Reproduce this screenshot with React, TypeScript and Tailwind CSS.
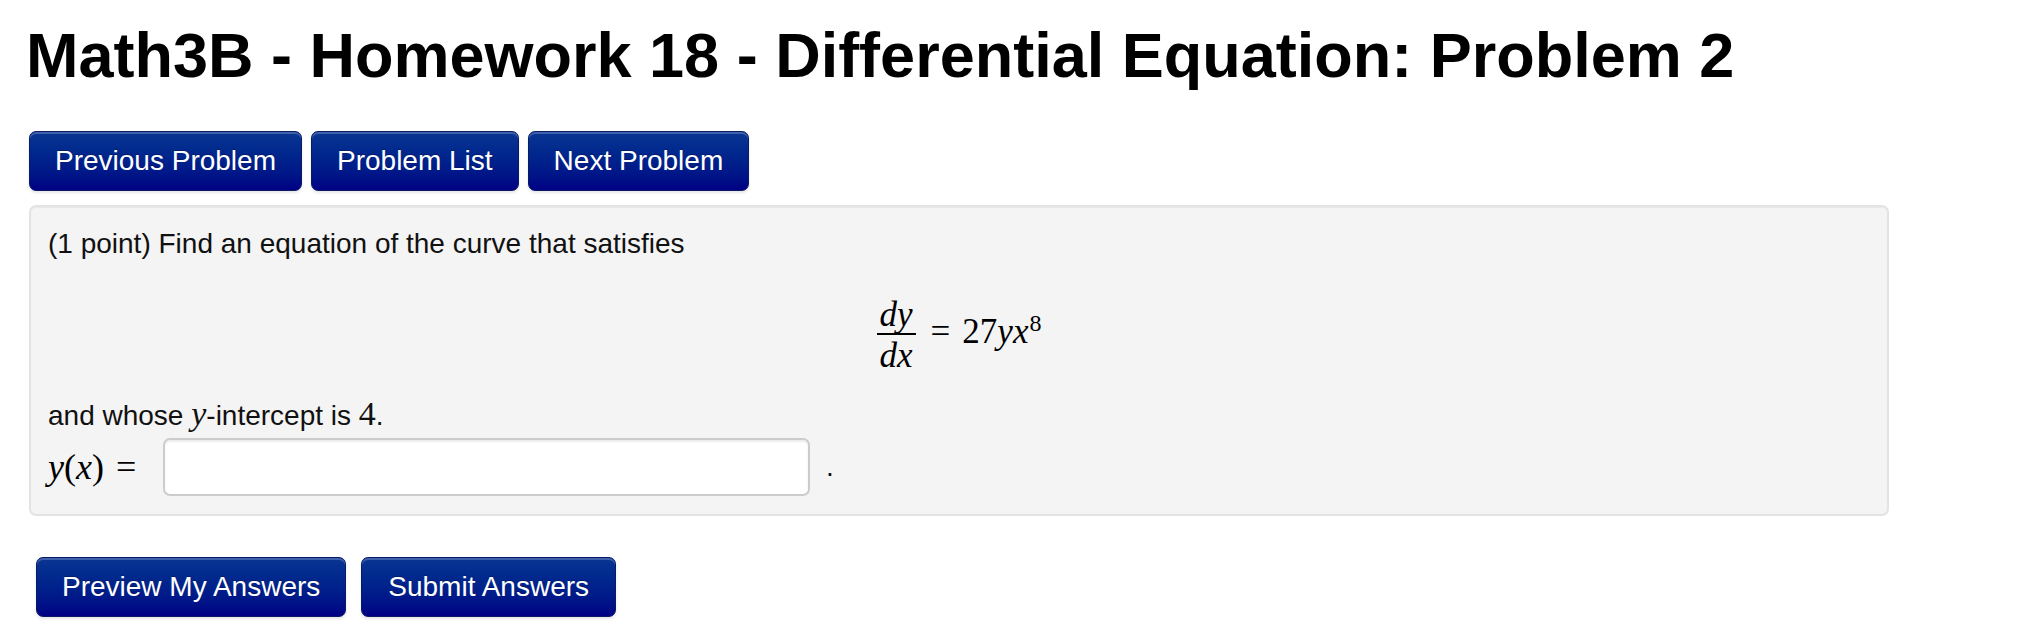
import React from 'react';

const navButton =
  'h-[60px] rounded-[7px] border border-[#0a1a66] bg-gradient-to-b from-[#0a3592] to-[#000084] px-[25px] text-[28px] leading-none text-white shadow-[inset_0_2px_0_rgba(255,255,255,0.22),0_2px_3px_rgba(0,0,0,0.1)] [text-shadow:0_-1px_0_rgba(0,0,0,0.25)]';

const Fraction: React.FC<{ top: React.ReactNode; bottom: React.ReactNode }> = ({ top, bottom }) => (
  <span className="inline-flex flex-col items-center">
    <span className="px-[3px] text-[35px] leading-[36px]">{top}</span>
    <span className="h-[2px] w-full bg-black" />
    <span className="mt-[3px] px-[3px] text-[35px] leading-[36px]">{bottom}</span>
  </span>
);

export default function App() {
  return (
    <div className="min-h-screen bg-white font-['Liberation_Sans',Arial,sans-serif] text-[#111]">
      <h1 className="pl-[26px] pt-[19px] text-[63px] font-bold leading-[72px] text-black">
        Math3B - Homework 18 - Differential Equation: Problem 2
      </h1>

      {/* Navigation */}
      <div className="mt-[40px] flex gap-[9px] pl-[29px]">
        <button className={navButton}>Previous Problem</button>
        <button className={navButton}>Problem List</button>
        <button className={navButton}>Next Problem</button>
      </div>

      {/* Problem */}
      <div className="ml-[29px] mt-[14px] w-[1860px] rounded-[7px] border-2 border-[#e3e3e3] bg-[#f4f4f4] px-[17px] pb-[18px] pt-[17px] shadow-[inset_0_1px_1px_rgba(0,0,0,0.05)]">
        <p className="text-[28px] leading-[40px]">(1 point) Find an equation of the curve that satisfies</p>

        <div className="mt-[33px] flex items-start justify-center font-['Liberation_Serif','Times_New_Roman',serif] text-black">
          <Fraction top={<i>dy</i>} bottom={<i>dx</i>} />
          <span className="ml-[15px] mt-[17px] text-[35px] leading-none">
            =<span className="ml-[12px]">27</span>
            <i>yx</i>
            <sup className="ml-[1px] text-[24px] leading-none">8</sup>
          </span>
        </div>

        <p className="mt-[22px] text-[28px] leading-[40px]">
          and whose{' '}
          <i className="font-['Liberation_Serif','Times_New_Roman',serif] text-[34px] leading-none">y</i>
          -intercept is{' '}
          <span className="font-['Liberation_Serif','Times_New_Roman',serif] text-[34px] leading-none">4</span>.
        </p>

        <div className="mt-[2px] flex items-center">
          <span className="w-[115px] shrink-0 font-['Liberation_Serif','Times_New_Roman',serif] text-[36px] leading-none text-black">
            <i>y</i>(<i>x</i>)<span className="ml-[12px]">=</span>
          </span>
          <input
            type="text"
            className="h-[58px] w-[647px] rounded-[7px] border-2 border-[#cccccc] bg-white px-3 text-[28px] shadow-[inset_0_2px_2px_rgba(0,0,0,0.075)] outline-none"
          />
          <span className="ml-[16px] text-[28px] leading-none">.</span>
        </div>
      </div>

      {/* Submit */}
      <div className="ml-[36px] mt-[41px] flex gap-[15px]">
        <button className={navButton}>Preview My Answers</button>
        <button className={`${navButton} px-[26px]`}>Submit Answers</button>
      </div>
    </div>
  );
}
